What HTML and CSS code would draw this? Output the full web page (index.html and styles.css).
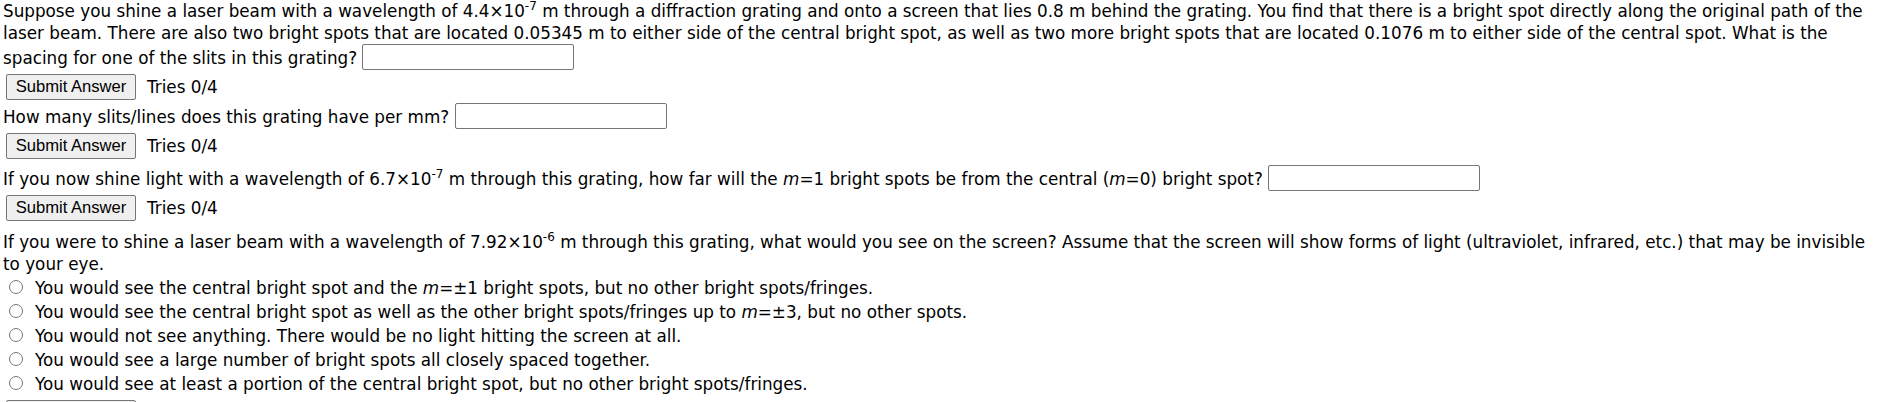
FILE: index.html
```html
<!DOCTYPE html>
<html lang="en">
<head>
<meta charset="utf-8">
<title>Diffraction grating problem</title>
<link rel="stylesheet" href="styles.css">
</head>
<body>
<div class="problem">
  <p class="q">Suppose you shine a laser beam with a wavelength of 4.4×10<sup>-7</sup> m through a diffraction grating and onto a screen that lies 0.8 m behind the grating. You find that there is a bright spot directly along the original path of the laser beam. There are also two bright spots that are located 0.05345 m to either side of the central bright spot, as well as two more bright spots that are located 0.1076 m to either side of the central spot. What is the spacing for one of the slits in this grating? <input class="ans" type="text"></p>
  <div class="submit-row"><button class="submit">Submit Answer</button><span class="tries">Tries 0/4</span></div>

  <p class="q">How many slits/lines does this grating have per mm? <input class="ans" type="text"></p>
  <div class="submit-row"><button class="submit">Submit Answer</button><span class="tries">Tries 0/4</span></div>

  <p class="q q-sup">If you now shine light with a wavelength of 6.7×10<sup>-7</sup> m through this grating, how far will the <i>m</i>=1 bright spots be from the central (<i>m</i>=0) bright spot? <input class="ans" type="text"></p>
  <div class="submit-row"><button class="submit">Submit Answer</button><span class="tries">Tries 0/4</span></div>

  <p class="q q-mc">If you were to shine a laser beam with a wavelength of 7.92×10<sup>-6</sup> m through this grating, what would you see on the screen? Assume that the screen will show forms of light (ultraviolet, infrared, etc.) that may be invisible to your eye.</p>
  <ul class="options">
    <li><label class="opt"><input type="radio" name="mc"><span>You would see the central bright spot and the <i>m</i>=±1 bright spots, but no other bright spots/fringes.</span></label></li>
    <li><label class="opt"><input type="radio" name="mc"><span>You would see the central bright spot as well as the other bright spots/fringes up to <i>m</i>=±3, but no other spots.</span></label></li>
    <li><label class="opt"><input type="radio" name="mc"><span>You would not see anything. There would be no light hitting the screen at all.</span></label></li>
    <li><label class="opt"><input type="radio" name="mc"><span>You would see a large number of bright spots all closely spaced together.</span></label></li>
    <li><label class="opt"><input type="radio" name="mc"><span>You would see at least a portion of the central bright spot, but no other bright spots/fringes.</span></label></li>
  </ul>
  <div class="submit-row"><button class="submit">Submit Answer</button><span class="tries">Tries 0/4</span></div>
</div>
</body>
</html>
```
FILE: styles.css
```css
html, body {
  margin: 0;
  padding: 0;
  background: #ffffff;
}

body {
  font-family: "DejaVu Sans", Verdana, sans-serif;
  font-size: 16.8px;
  line-height: 22px;
  color: #000000;
}

.problem {
  padding: 0 20px 0 3px;
}

.q {
  margin: 0;
}

.q sup {
  font-size: 12px;
  line-height: 0;
  vertical-align: 7px;
}

.q-sup {
  margin-top: 6px;
}

.ans {
  box-sizing: border-box;
  width: 212px;
  height: 26px;
  margin: 0;
  padding: 1px 3px;
  border: 1px solid #767676;
  border-radius: 2px;
  font: 16.8px "DejaVu Sans", sans-serif;
  vertical-align: 1px;
  background: #ffffff;
}

.submit-row {
  display: flex;
  align-items: center;
  gap: 11px;
  margin: 4px 0 3px 3px;
}

.submit {
  box-sizing: border-box;
  width: 130px;
  height: 26px;
  padding: 0;
  border: 1px solid #767676;
  border-radius: 2px;
  background: #efefef;
  font-family: "Liberation Sans", Arial, sans-serif;
  font-size: 16.6px;
  color: #000000;
}

.tries {
  font-size: 16.8px;
}

.q-mc {
  margin-top: 10px;
}

.options {
  list-style: none;
  margin: 1px 0 0 0;
  padding: 0;
}

.opt {
  display: flex;
  align-items: center;
  height: 24px;
}

.opt input {
  width: 14px;
  height: 14px;
  margin: 0 12px 3px 6px;
}
```
